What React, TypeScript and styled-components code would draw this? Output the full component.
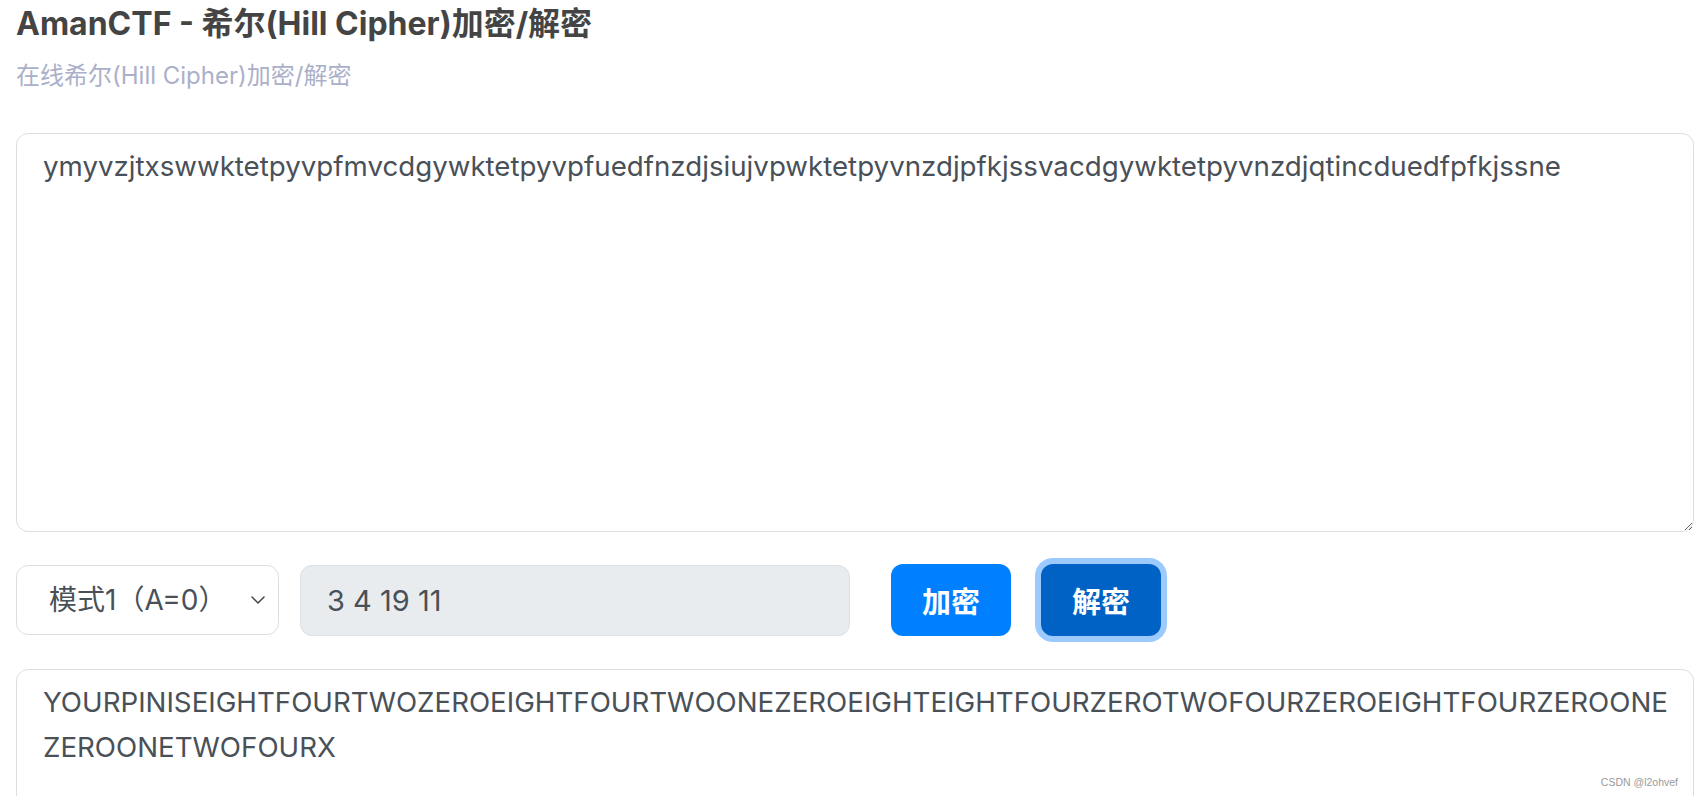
import React from "react"
import styled, { createGlobalStyle } from "styled-components"
import { ChevronDown } from "lucide-react"

const cipherText =
  "ymyvzjtxswwktetpyvpfmvcdgywktetpyvpfuedfnzdjsiujvpwktetpyvnzdjpfkjssvacdgywktetpyvnzdjqtincduedfpfkjssne"
const plainText =
  "YOURPINISEIGHTFOURTWOZEROEIGHTFOURTWOONEZEROEIGHTEIGHTFOURZEROTWOFOURZEROEIGHTFOURZEROONEZEROONETWOFOURX"

const GlobalStyle = createGlobalStyle`
  html, body {
    margin: 0;
    padding: 0;
    background: #fff;
    overflow: hidden;
  }
  body {
    font-family: Inter, "Noto Sans CJK SC", sans-serif;
    color: #495057;
  }
`

export default function App() {
  return (
    <Page>
      <GlobalStyle />
      <Header>
        <Title>AmanCTF - 希尔(Hill Cipher)加密/解密</Title>
        <Subtitle>在线希尔(Hill Cipher)加密/解密</Subtitle>
      </Header>
      <TextBox rows={8} defaultValue={cipherText} tall />
      <Controls>
        <SelectWrap>
          <Select defaultValue="1">
            <option value="1">模式1（A=0）</option>
            <option value="2">模式2（A=1）</option>
          </Select>
          <Chevron size={24} strokeWidth={1.5} />
        </SelectWrap>
        <KeyInput readOnly value="3 4 19 11" />
        <Buttons>
          <Button>加密</Button>
          <Button active>解密</Button>
        </Buttons>
      </Controls>
      <TextBox rows={4} defaultValue={plainText} />
      <Watermark>CSDN @l2ohvef</Watermark>
    </Page>
  )
}

const Page = styled.div`
  position: relative;
  height: 796px;
  padding: 0 0 0 16px;
  box-sizing: border-box;
  display: flex;
  flex-direction: column;
  overflow: hidden;
`

const Header = styled.div`
  display: flex;
  flex-direction: column;
  padding-top: 4px;
  margin-bottom: 41px;
`

const Title = styled.h1`
  margin: 0;
  font-size: 32px;
  font-weight: 700;
  line-height: 40px;
  color: #444;
`

const Subtitle = styled.p`
  margin: 16px 0 0;
  font-size: 24px;
  line-height: 32px;
  color: #abb0c9;
`

const TextBox = styled.textarea<{ tall?: boolean }>`
  box-sizing: border-box;
  width: 100%;
  flex-shrink: 0;
  height: ${(p) => (p.tall ? "399px" : "200px")};
  padding: 10px 12px 10px 26px;
  border: 1.5px solid #dedede;
  border-radius: 12px;
  font-family: Inter, "Noto Sans CJK SC", sans-serif;
  font-size: 27.7px;
  line-height: 45px;
  color: #495057;
  background: #fff;
  resize: vertical;
  outline: none;
  word-break: break-all;
`

const Controls = styled.div`
  display: flex;
  align-items: center;
  margin: 32px 0 33px;
  height: 72px;
`

const SelectWrap = styled.div`
  position: relative;
  width: 263px;
  height: 70px;
  margin-right: 21px;
`

const Select = styled.select`
  appearance: none;
  box-sizing: border-box;
  width: 100%;
  height: 100%;
  padding: 0 40px 0 32px;
  border: 1.5px solid #dedede;
  border-radius: 12px;
  background: #fff;
  font-family: Inter, "Noto Sans CJK SC", sans-serif;
  font-size: 28px;
  color: #495057;
  outline: none;
`

const Chevron = styled(ChevronDown)`
  position: absolute;
  right: 9px;
  top: 23px;
  color: #444;
  pointer-events: none;
`

const KeyInput = styled.input`
  box-sizing: border-box;
  width: 550px;
  height: 71px;
  padding: 0 26px;
  border: 1.5px solid #dcdfe2;
  border-radius: 12px;
  background: #e9ecef;
  font-family: Inter, "Noto Sans CJK SC", sans-serif;
  font-size: 29px;
  color: #495057;
  outline: none;
`

const Buttons = styled.div`
  display: flex;
  gap: 30px;
  margin-left: 41px;
`

const Button = styled.button<{ active?: boolean }>`
  width: 120px;
  height: 72px;
  border: none;
  border-radius: 12px;
  font-family: "Noto Sans CJK SC", sans-serif;
  font-size: 29px;
  font-weight: 700;
  color: #fff;
  background: ${(p) => (p.active ? "#0062c4" : "#0080ff")};
  box-shadow: ${(p) => (p.active ? "0 0 0 6px #9ccaff" : "none")};
  cursor: pointer;
`

const Watermark = styled.span`
  position: absolute;
  right: 16px;
  bottom: 8px;
  font-family: "Liberation Sans", Arial, sans-serif;
  font-size: 10.5px;
  color: #9a9a9a;
`
